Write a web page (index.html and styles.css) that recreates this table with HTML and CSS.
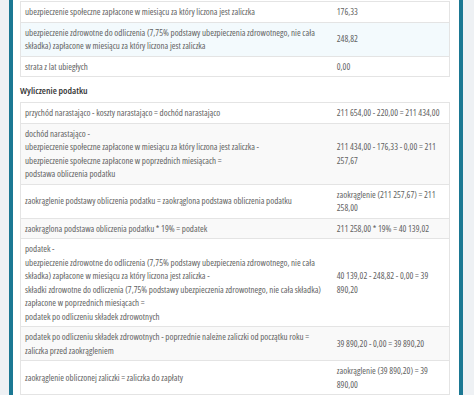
FILE: index.html
```html
<!DOCTYPE html>
<html lang="pl">
<head>
<meta charset="utf-8">
<title>Wyliczenie podatku</title>
<link rel="stylesheet" href="styles.css">
</head>
<body>
<div class="frame">
  <table class="calc">
    <colgroup><col class="c-desc"><col class="c-val"></colgroup>
    <tr><td>ubezpieczenie społeczne zapłacone w miesiącu za który liczona jest zaliczka</td><td>176,33</td></tr>
    <tr class="hl"><td>ubezpieczenie zdrowotne do odliczenia (7,75% podstawy ubezpieczenia zdrowotnego, nie cała składka) zapłacone w miesiącu za który liczona jest zaliczka</td><td>248,82</td></tr>
    <tr><td>strata z lat ubiegłych</td><td>0,00</td></tr>
  </table>

  <h3 class="section-title">Wyliczenie podatku</h3>

  <table class="calc striped">
    <colgroup><col class="c-desc"><col class="c-val"></colgroup>
    <tr><td>przychód narastająco - koszty narastająco = dochód narastająco</td><td>211 654,00 - 220,00 = 211 434,00</td></tr>
    <tr><td>dochód narastająco -<br>ubezpieczenie społeczne zapłacone w miesiącu za który liczona jest zaliczka -<br>ubezpieczenie społeczne zapłacone w poprzednich miesiącach =<br>podstawa obliczenia podatku</td><td>211 434,00 - 176,33 - 0,00 = 211 257,67</td></tr>
    <tr><td>zaokrąglenie podstawy obliczenia podatku = zaokrąglona podstawa obliczenia podatku</td><td>zaokrąglenie (211 257,67) = 211 258,00</td></tr>
    <tr><td>zaokrąglona podstawa obliczenia podatku * 19% = podatek</td><td>211 258,00 * 19% = 40 139,02</td></tr>
    <tr><td>podatek -<br>ubezpieczenie zdrowotne do odliczenia (7,75% podstawy ubezpieczenia zdrowotnego, nie cała składka) zapłacone w miesiącu za który liczona jest zaliczka -<br>składki zdrowotne do odliczenia (7,75% podstawy ubezpieczenia zdrowotnego, nie cała składka) zapłacone w poprzednich miesiącach =<br>podatek po odliczeniu składek zdrowotnych</td><td>40 139,02 - 248,82 - 0,00 = 39 890,20</td></tr>
    <tr><td>podatek po odliczeniu składek zdrowotnych - poprzednie należne zaliczki od początku roku =<br>zaliczka przed zaokrągleniem</td><td>39 890,20 - 0,00 = 39 890,20</td></tr>
    <tr><td>zaokrąglenie obliczonej zaliczki = zaliczka do zapłaty</td><td>zaokrąglenie (39 890,20) = 39 890,00</td></tr>
  </table>
</div>
</body>
</html>
```

FILE: styles.css
```css
html, body {
  margin: 0;
  padding: 0;
  height: 100%;
  overflow: hidden;
}
body {
  background: #eef1f4;
  font-family: "Open Sans", "DejaVu Sans", sans-serif;
  font-size: 9px;
  font-stretch: 78%;
  line-height: 13.5px;
  color: #626262;
}
.frame {
  margin: 0 11px 0 9px;
  min-height: 100%;
  box-sizing: border-box;
  background: #fff;
  border-left: 4px solid #1b7893;
  border-right: 4px solid #1b7893;
  padding: 1px 9px 0 7px;
}
.calc {
  width: 100%;
  table-layout: fixed;
  border-collapse: collapse;
  border: 1px solid #e4e4e4;
}
.c-desc { width: 72.8%; }
.c-val { width: 27.2%; }
.calc td {
  padding: 3px 4px;
  border-top: 1px solid #e4e4e4;
  vertical-align: middle;
  text-align: left;
}
.calc tr.hl td { background: #f3fafd; }
.striped tr:nth-child(odd) td { background: #fff; }
.striped tr:nth-child(even) td { background: #f9f9f9; }
.section-title {
  margin: 0;
  padding: 7px 0 5px;
  font-size: 9.5px;
  line-height: 13px;
  font-weight: 600;
  color: #333;
}
```
